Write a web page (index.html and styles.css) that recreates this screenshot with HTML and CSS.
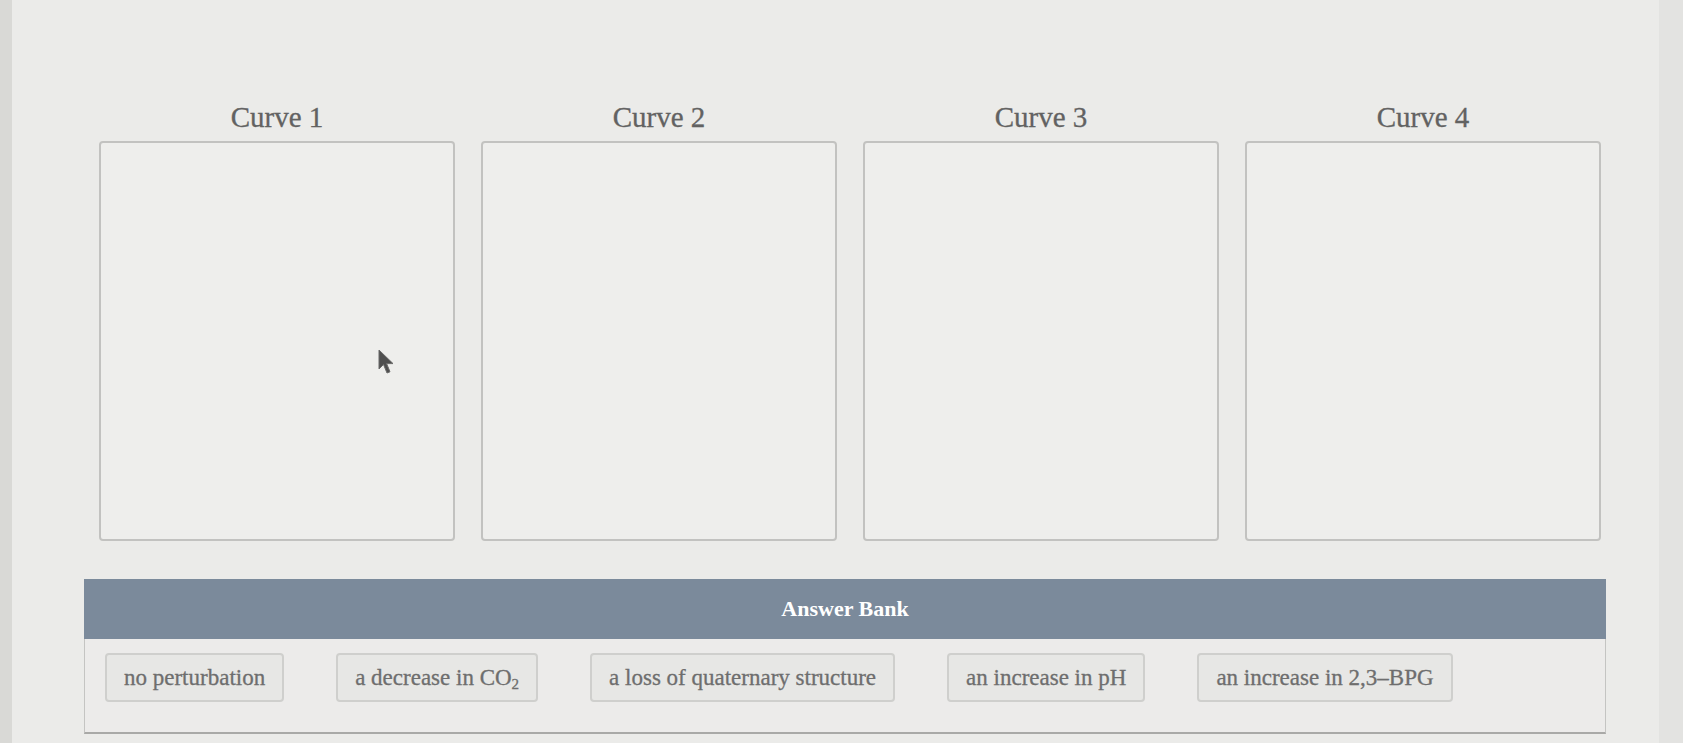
FILE: index.html
```html
<!DOCTYPE html>
<html lang="en">
<head>
<meta charset="utf-8">
<title>Curves</title>
<link rel="stylesheet" href="styles.css">
</head>
<body>
<main class="screen">
  <section class="curves">
    <div class="curve">
      <h2 class="curve-title">Curve 1</h2>
      <div class="drop">
        <svg class="pointer" width="18" height="26" viewBox="0 0 18 26" aria-hidden="true">
          <path d="M1 1 L1 20 L5.5 15.5 L9 24 L12 22.8 L8.6 14.6 L15 14.6 Z" fill="#4f4f4f" stroke="#6a6a6a" stroke-width="1" stroke-linejoin="round"/>
        </svg>
      </div>
    </div>
    <div class="curve">
      <h2 class="curve-title">Curve 2</h2>
      <div class="drop"></div>
    </div>
    <div class="curve">
      <h2 class="curve-title">Curve 3</h2>
      <div class="drop"></div>
    </div>
    <div class="curve">
      <h2 class="curve-title">Curve 4</h2>
      <div class="drop"></div>
    </div>
  </section>

  <section class="bank">
    <header class="bank-head">Answer Bank</header>
    <div class="bank-body">
      <div class="chip">no perturbation</div>
      <div class="chip">a decrease in CO<sub>2</sub></div>
      <div class="chip">a loss of quaternary structure</div>
      <div class="chip">an increase in pH</div>
      <div class="chip">an increase in 2,3–BPG</div>
    </div>
  </section>
</main>
</body>
</html>
```

FILE: styles.css
```css
html, body {
  margin: 0;
  padding: 0;
  height: 100%;
}

body {
  background-color: #ebebe9;
  background-image:
    linear-gradient(to right, #d9d9d6 0, #d9d9d6 12px, transparent 12px),
    linear-gradient(to left, #e3e3e1 0, #e3e3e1 24px, transparent 24px);
  font-family: "Liberation Serif", "Times New Roman", serif;
  color: #666666;
  overflow: hidden;
}

.screen {
  padding-top: 100px;
}

/* four drop targets, each with its caption */
.curves {
  display: grid;
  grid-template-columns: repeat(4, 1fr);
  column-gap: 26px;
  margin: 0 82px 0 99px;
}

.curve {
  display: flex;
  flex-direction: column;
  align-items: stretch;
  gap: 6px;
}

.curve-title {
  margin: 0;
  font-size: 29px;
  line-height: 35px;
  font-weight: normal;
  text-align: center;
  color: #626262;
  -webkit-text-stroke: 0.3px #626262;
}

.drop {
  position: relative;
  height: 400px;
  border: 2px solid #c2c2c0;
  border-radius: 4px;
  box-sizing: border-box;
  background: #eeeeec;
}

.pointer {
  position: absolute;
  left: 277px;
  top: 206px;
  filter: blur(0.6px);
}

/* answer bank */
.bank {
  margin: 38px 77px 0 84px;
}

.bank-head {
  height: 60px;
  display: flex;
  align-items: center;
  justify-content: center;
  background: #7b8a9b;
  color: #ffffff;
  font-size: 22px;
  font-weight: bold;
}

.bank-body {
  display: flex;
  align-items: center;
  gap: 52px;
  padding: 14px 20px 30px;
  border-left: 1px solid #c4c4c2;
  border-right: 1px solid #c4c4c2;
  border-bottom: 2px solid #a9a9a7;
  background: #ecebea;
}

.chip {
  height: 49px;
  box-sizing: border-box;
  padding: 0 17px;
  display: flex;
  align-items: center;
  border: 2px solid #cfcfcd;
  border-radius: 4px;
  background: #e7e7e5;
  font-size: 23px;
  color: #6e6e6e;
  -webkit-text-stroke: 0.3px #6e6e6e;
  white-space: nowrap;
}

.chip sub {
  font-size: 15px;
  line-height: 0;
  position: relative;
  top: 6px;
  vertical-align: baseline;
}
```
